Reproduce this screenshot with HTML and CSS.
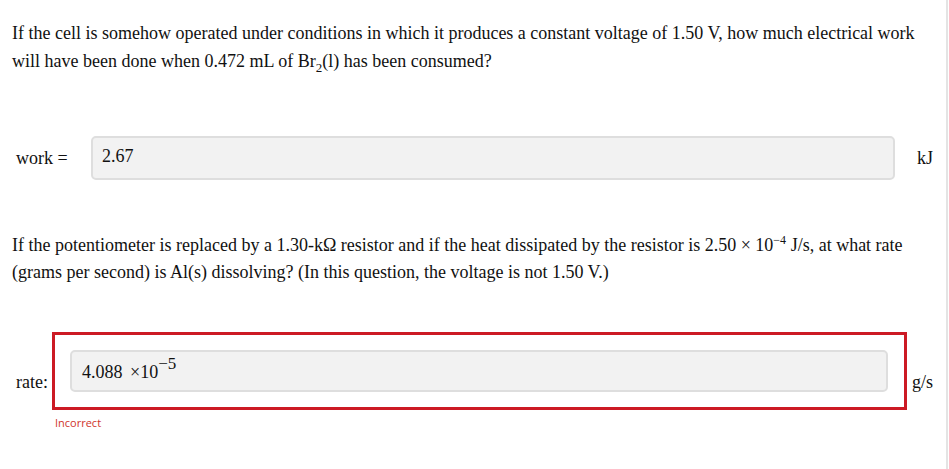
FILE: index.html
```html
<!DOCTYPE html>
<html>
<head>
<meta charset="utf-8">
<link rel="stylesheet" href="styles.css">
</head>
<body>
<div class="page">
  <p class="question q1">If the cell is somehow operated under conditions in which it produces a constant voltage of 1.50 V, how much electrical work will have been done when 0.472 mL of Br<sub>2</sub>(l) has been consumed?</p>

  <div class="row row-work">
    <span class="label">work =</span>
    <div class="field"><span class="val">2.67</span></div>
    <span class="unit">kJ</span>
  </div>

  <p class="question q2">If the potentiometer is replaced by a 1.30-kΩ resistor and if the heat dissipated by the resistor is 2.50 × 10<sup>−4</sup> J/s, at what rate (grams per second) is Al(s) dissolving? (In this question, the voltage is not 1.50 V.)</p>

  <div class="row row-rate">
    <span class="label label-rate">rate:</span>
    <div class="wrong">
      <div class="field field-rate"><span class="val val-rate">4.088 <span class="times">×10</span><sup class="exp">−5</sup></span></div>
    </div>
    <span class="unit unit-rate">g/s</span>
  </div>
  <div class="feedback">Incorrect</div>
</div>
</body>
</html>
```

FILE: styles.css
```css
html, body {
  margin: 0;
  padding: 0;
  background: #fff;
}
body {
  font-family: "Liberation Serif", "Times New Roman", serif;
  font-size: 18px;
  color: #111;
}
.page {
  width: 948px;
  height: 469px;
  box-sizing: border-box;
  border-right: 2px solid #e4e4e4;
  padding-left: 12px;
  overflow: hidden;
}
.question {
  margin: 0;
  line-height: 27px;
}
.q1 {
  padding-top: 19px;
  line-height: 28px;
}
.q1 sub {
  font-size: 13px;
  line-height: 0;
  vertical-align: -5px;
}
.q2 {
  margin-top: 52px;
}
.q2 sup {
  font-size: 12px;
  line-height: 0;
  vertical-align: 7px;
}
.row {
  display: flex;
  align-items: center;
}
.row-work {
  margin-top: 61px;
  padding-left: 4px;
}
.label {
  width: 75px;
  flex: none;
}
.field {
  box-sizing: border-box;
  background: #f2f2f2;
  border: 2px solid #dedede;
  border-radius: 5px;
}
.row-work .field {
  width: 804px;
  height: 44px;
  padding: 8px 0 0 9px;
}
.unit {
  margin-left: 22px;
}
.row-rate {
  margin-top: 46px;
  padding-left: 4px;
}
.label-rate {
  width: 36px;
  padding-top: 22px;
}
.wrong {
  box-sizing: border-box;
  width: 855px;
  height: 78px;
  border: 3px solid #cc1a24;
  padding: 15px 16px 0 15px;
}
.field-rate {
  height: 42px;
  padding: 10px 0 0 10px;
}
.times {
  margin-left: 3px;
}
.exp {
  font-size: 17px;
  line-height: 0;
  vertical-align: 9px;
}
.unit-rate {
  margin-left: 5px;
  padding-top: 22px;
}
.feedback {
  margin: 5px 0 0 43px;
  font-family: "Open Sans", "Liberation Sans", sans-serif;
  font-size: 11px;
  color: #d0342c;
}
```
